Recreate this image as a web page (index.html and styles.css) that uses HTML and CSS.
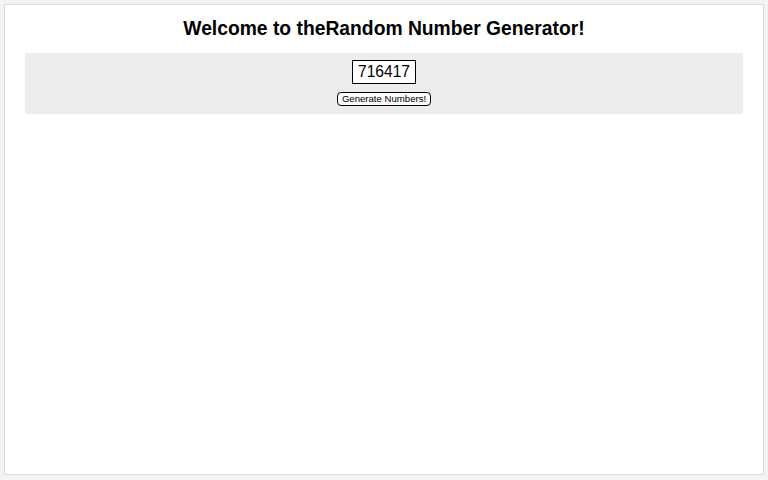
FILE: index.html
```html
<!doctype html>
<html lang="en">
<head>
    <meta charset="UTF-8">
    <title>Random Number Generator</title>
    <link rel="stylesheet" href="styles.css">
</head>
<body>
    <div id="page">
        <h1 class="title">Welcome to theRandom Number Generator!</h1>
        <div id="panel">
            <span id="number">716417</span>
            <button id="generate" type="button">Generate Numbers!</button>
        </div>
    </div>
    <script type="text/javascript">
        var oNumber = document.getElementById('number');
        var oBtn = document.getElementById('generate');
        oBtn.onclick = function(){
            var n = Math.floor(Math.random() * 900000) + 100000; //六位数
            oNumber.innerHTML = n;
        };
    </script>
</body>
</html>
```
FILE: styles.css
```css
*{
    margin: 0;
    padding: 0;
}
html{
    background: #f4f4f4;
}
body{
    margin: 4px;
    font-family: "Liberation Sans", Arial, sans-serif;
}
#page{
    height: 469px;
    background: #fff;
    border: 1px solid #dcdcdc;
    padding: 0 20px;
}
.title{
    font-size: 19.3px;
    line-height: 23px;
    text-align: center;
    padding-top: 12px;
    margin-bottom: 13px;
}
#panel{
    background: #ededed;
    display: flex;
    flex-direction: column;
    align-items: center;
    gap: 8px;
    padding: 7px 0 8px;
}
#number{
    border: 1px solid #000;
    background: #fff;
    font-size: 15.6px;
    line-height: 18px;
    padding: 2px 5px;
}
#generate{
    font-family: "Liberation Sans", Arial, sans-serif;
    font-size: 9.6px;
    line-height: 12px;
    padding: 0 3.5px;
    border: 1px solid #000;
    border-radius: 4px;
    background: #fcfcfc;
    color: #000;
}
```
